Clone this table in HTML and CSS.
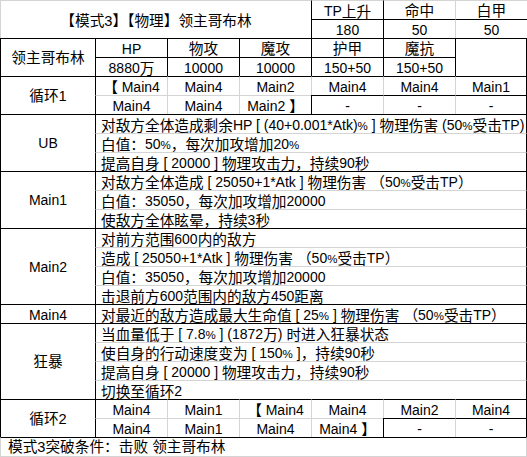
FILE: index.html
```html
<!DOCTYPE html>
<html lang="zh-CN">
<head>
<meta charset="utf-8">
<title>模式3 领主哥布林</title>
<link rel="stylesheet" href="styles.css">
</head>
<body>
<div class="sheet">
  <!-- header -->
  <div class="c m w4 r2 zc title">【模式3】【物理】领主哥布林</div>
  <div class="c lk">TP<span class="z">上升</span></div>
  <div class="c lk zc">命中</div>
  <div class="c zc">白甲</div>
  <div class="c tk lk">180</div>
  <div class="c tk lk">50</div>
  <div class="c tk">50</div>

  <div class="c m r2 tk lk zc">领主哥布林</div>
  <div class="c tk lk">HP</div>
  <div class="c tk lk zc">物攻</div>
  <div class="c tk lk zc">魔攻</div>
  <div class="c tk lk zc">护甲</div>
  <div class="c tk lk zc">魔抗</div>
  <div class="c r2 tk lk rk"></div>
  <div class="c tk lk">8880<span class="z">万</span></div>
  <div class="c tk lk">10000</div>
  <div class="c tk lk">10000</div>
  <div class="c tk lk">150+50</div>
  <div class="c tk lk">150+50</div>

  <!-- 循环1 -->
  <div class="c m r2 tk lk zc">循环1</div>
  <div class="c tk lk"><span class="z">【</span> Main4</div>
  <div class="c tk">Main4</div>
  <div class="c tk">Main2</div>
  <div class="c tk">Main4</div>
  <div class="c tk">Main4</div>
  <div class="c tk rk">Main1</div>
  <div class="c lk">Main4</div>
  <div class="c">Main4</div>
  <div class="c">Main2 <span class="z">】</span></div>
  <div class="c tk lk">-</div>
  <div class="c tk">-</div>
  <div class="c tk rk">-</div>

  <!-- UB -->
  <div class="c m r3 tk lk">UB</div>
  <div class="c w6 d tk lk rk"><span class="z">对敌方全体造成剩余</span>HP [ (40+0.001*Atk)<span class="pc">%</span> ] <span class="z">物理伤害</span> (50<span class="pc">%</span><span class="z">受击</span>TP)</div>
  <div class="c w6 d lk rk"><span class="z">白值：</span>50<span class="pc">%</span><span class="z">，每次加攻增加</span>20<span class="pc">%</span></div>
  <div class="c w6 d lk rk"><span class="z">提高自身</span> [ 20000 ] <span class="z">物理攻击力，持续</span>90<span class="z">秒</span></div>

  <!-- Main1 -->
  <div class="c m r3 tk lk">Main1</div>
  <div class="c w6 d tk lk rk"><span class="z">对敌方全体造成</span> [ 25050+1*Atk ] <span class="z">物理伤害 （</span>50<span class="pc">%</span><span class="z">受击</span>TP<span class="z">）</span></div>
  <div class="c w6 d lk rk"><span class="z">白值：</span>35050<span class="z">，每次加攻增加</span>20000</div>
  <div class="c w6 d lk rk"><span class="z">使敌方全体眩晕，持续</span>3<span class="z">秒</span></div>

  <!-- Main2 -->
  <div class="c m r4 tk lk">Main2</div>
  <div class="c w6 d tk lk rk"><span class="z">对前方范围</span>600<span class="z">内的敌方</span></div>
  <div class="c w6 d lk rk"><span class="z">造成</span> [ 25050+1*Atk ] <span class="z">物理伤害 （</span>50<span class="pc">%</span><span class="z">受击</span>TP<span class="z">）</span></div>
  <div class="c w6 d lk rk"><span class="z">白值：</span>35050<span class="z">，每次加攻增加</span>20000</div>
  <div class="c w6 d lk rk"><span class="z">击退前方</span>600<span class="z">范围内的敌方</span>450<span class="z">距离</span></div>

  <!-- Main4 -->
  <div class="c tk lk">Main4</div>
  <div class="c w6 d tk lk rk"><span class="z">对最近的敌方造成最大生命值</span> [ 25<span class="pc">%</span> ] <span class="z">物理伤害 （</span>50<span class="pc">%</span><span class="z">受击</span>TP<span class="z">）</span></div>

  <!-- 狂暴 -->
  <div class="c m r4 tk lk zc">狂暴</div>
  <div class="c w6 d tk lk rk"><span class="z">当血量低于</span> [ 7.8<span class="pc">%</span> ] (1872<span class="z">万</span>) <span class="z">时进入狂暴状态</span></div>
  <div class="c w6 d lk rk"><span class="z">使自身的行动速度变为</span> [ 150<span class="pc">%</span> ]<span class="z">，持续</span>90<span class="z">秒</span></div>
  <div class="c w6 d lk rk"><span class="z">提高自身</span> [ 20000 ] <span class="z">物理攻击力，持续</span>90<span class="z">秒</span></div>
  <div class="c w6 d lk rk"><span class="z">切换至循环</span>2</div>

  <!-- 循环2 -->
  <div class="c m r2 tk lk zc">循环2</div>
  <div class="c tk lk">Main4</div>
  <div class="c tk">Main1</div>
  <div class="c tk"><span class="z">【</span> Main4</div>
  <div class="c tk">Main4</div>
  <div class="c tk">Main2</div>
  <div class="c tk rk">Main4</div>
  <div class="c lk">Main4</div>
  <div class="c">Main1</div>
  <div class="c">Main4</div>
  <div class="c">Main4 <span class="z">】</span></div>
  <div class="c tk lk">-</div>
  <div class="c tk rk">-</div>

  <!-- footer -->
  <div class="c w7 d foot tk zc">模式3突破条件：击败 领主哥布林</div>
</div>
</body>
</html>
```

FILE: styles.css
```css
html, body {
  margin: 0;
  padding: 0;
  background: #ffffff;
}

.sheet {
  display: grid;
  grid-template-columns: 95px repeat(6, 72px);
  grid-template-rows: repeat(23, 19px) 20px;
  width: 527px;
  font-family: "Liberation Sans", "Noto Sans CJK SC", sans-serif;
  font-size: 14px;
  color: #000000;
}

.c {
  box-sizing: border-box;
  border-top: 1px solid #d4d4d4;
  border-left: 1px solid #d4d4d4;
  padding-top: 2px;
  text-align: center;
  white-space: nowrap;
  overflow: hidden;
  line-height: 17px;
}

.m {
  display: flex;
  align-items: center;
  justify-content: center;
  padding-top: 1px;
}

.title {
  padding-top: 3px;
}

.z {
  font-size: 14.67px;
  line-height: 13px;
  vertical-align: -1px;
}

.zc {
  font-size: 14.67px;
}

.pc {
  font-size: 11.5px;
}

.tk { border-top-color: #000000; }
.lk { border-left-color: #000000; }
.rk { border-right: 1px solid #000000; }

.w4 { grid-column: span 4; }
.w6 { grid-column: span 6; }
.w7 { grid-column: span 7; }
.r2 { grid-row: span 2; }
.r3 { grid-row: span 3; }
.r4 { grid-row: span 4; }

.d {
  text-align: left;
  padding-left: 5px;
}

.foot {
  border-left-color: #d4d4d4;
  border-right: 1px solid #d4d4d4;
  border-bottom: 1px solid #d4d4d4;
  padding-left: 7px;
  padding-top: 1px;
}
```
